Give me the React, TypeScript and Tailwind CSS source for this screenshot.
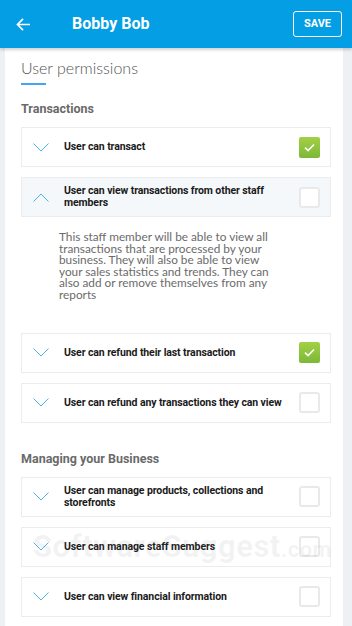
import React from "react";

type Perm = { label: string; checked: boolean; open?: boolean; detail?: string };

const transactions: Perm[] = [
  { label: "User can transact", checked: true },
  {
    label: "User can view transactions from other staff members",
    checked: false,
    open: true,
    detail:
      "This staff member will be able to view all transactions that are processed by your business. They will also be able to view your sales statistics and trends. They can also add or remove themselves from any reports",
  },
  { label: "User can refund their last transaction", checked: true },
  { label: "User can refund any transactions they can view", checked: false },
];

const business: Perm[] = [
  { label: "User can manage products, collections and storefronts", checked: false },
  { label: "User can manage staff members", checked: false },
  { label: "User can view financial information", checked: false },
];

function Chevron({ up }: { up?: boolean }) {
  return (
    <svg viewBox="0 0 16 9" className="w-[16px] h-[9px] flex-shrink-0" fill="none">
      <path
        d={up ? "M0.5 8.5L8 1L15.5 8.5" : "M0.5 0.5L8 8L15.5 0.5"}
        stroke="#4db2ea"
        strokeWidth="1"
      />
    </svg>
  );
}

function Checkbox({ checked }: { checked: boolean }) {
  if (checked) {
    return (
      <div className="w-[21px] h-[21px] rounded-[2px] bg-gradient-to-b from-[#a3d045] to-[#7cb837] flex items-center justify-center flex-shrink-0">
        <svg viewBox="0 0 12 10" className="w-[11px] h-[9px]" fill="none">
          <path d="M1 5.2L4.4 8.4L11 1.6" stroke="white" strokeWidth="1.8" />
        </svg>
      </div>
    );
  }
  return <div className="w-[21px] h-[21px] rounded-[3px] border-2 border-[#e9e9e9] bg-white flex-shrink-0" />;
}

function PermRow({ perm }: { perm: Perm }) {
  return (
    <div>
      <div
        className={
          "flex items-center h-[40px] border border-[#ececec] pl-[11px] pr-[10px] " +
          (perm.open ? "bg-[#f5f8fb]" : "bg-white")
        }
      >
        <Chevron up={perm.open} />
        <p className="flex-1 ml-[15px] mr-[8px] text-[10.5px] leading-[12px] tracking-[-0.1px] font-bold text-[#1a1a1a] font-['Roboto',sans-serif]">
          {perm.label}
        </p>
        <Checkbox checked={perm.checked} />
      </div>
      {perm.detail && (
        <p className="pl-[38px] pr-[48px] pt-[14px] pb-[22px] text-[11.8px] leading-[11.6px] text-[#6b6b6b] font-['Lato',sans-serif]">
          {perm.detail}
        </p>
      )}
    </div>
  );
}

function Section({ title, perms }: { title: string; perms: Perm[] }) {
  return (
    <div>
      <h3 className="text-[12.5px] leading-[16px] font-bold text-[#6a6a6a] font-['Roboto',sans-serif] mb-[10px]">
        {title}
      </h3>
      <div className="flex flex-col gap-[10px]">
        {perms.map((p) => (
          <PermRow key={p.label} perm={p} />
        ))}
      </div>
    </div>
  );
}

export default function App() {
  return (
    <div className="w-[352px] h-[626px] overflow-hidden bg-[#eef0f4] relative font-['Roboto',sans-serif]">
      {/* Header */}
      <header className="h-[48px] bg-[#039ee3] flex items-center relative z-10 shadow-[0_2px_3px_rgba(0,0,0,0.18)]">
        <svg viewBox="0 0 16 14" className="w-[15px] h-[13px] ml-[16px]" fill="none">
          <path d="M15 7H1.5M7.5 1L1.5 7L7.5 13" stroke="white" strokeWidth="1.8" />
        </svg>
        <h1 className="ml-[41px] text-[16px] font-bold text-white">Bobby Bob</h1>
        <button className="ml-auto mr-[10px] w-[49px] h-[26px] border-[1.5px] border-white rounded-[3px] text-[11px] font-bold text-white">
          SAVE
        </button>
      </header>

      {/* Card */}
      <div className="ml-[5px] w-[338px] h-[578px] bg-white pl-[16px] pr-[12px]">
        <div className="pt-[10px]">
          <h2 className="text-[16px] leading-[20px] font-light text-[#555] font-['Lato',sans-serif]">
            User permissions
          </h2>
          <div className="mt-[5px] w-[25px] h-[2px] bg-[#42a5f5]" />
        </div>

        <div className="mt-[16px]">
          <Section title="Transactions" perms={transactions} />
        </div>
        <div className="mt-[28px]">
          <Section title="Managing your Business" perms={business} />
        </div>
      </div>

      {/* watermark */}
      <div className="absolute left-[33px] top-[524px] text-[31px] font-bold tracking-[0.5px] text-[rgba(120,120,120,0.09)] pointer-events-none select-none">
        SoftwareSuggest<span className="text-[22px]">.com</span>
      </div>
    </div>
  );
}
